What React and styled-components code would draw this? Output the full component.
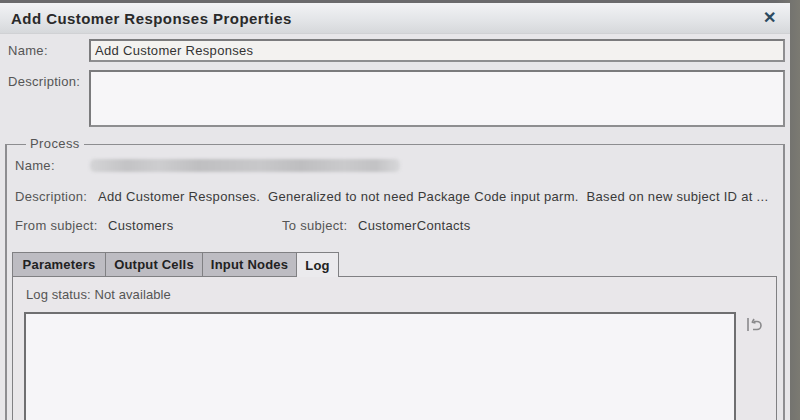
import React from "react";
import styled, { createGlobalStyle } from "styled-components";

const GlobalStyle = createGlobalStyle`
  html, body { margin: 0; padding: 0; }
  body {
    background: #6d6d6f;
    font-family: "Liberation Sans", Arial, sans-serif;
    color: #333;
  }
`;

const Screen = styled.div`
  width: 800px;
  height: 420px;
  overflow: hidden;
  display: flex;
  padding: 3px 10px 0 0;
  box-sizing: border-box;
  background: linear-gradient(90deg, #6a6a6c 0%, #6a6a6c 97%, #7b7a72 100%);
`;

const Dialog = styled.div`
  flex: 1;
  display: flex;
  flex-direction: column;
  background: #e7e6e9;
  min-height: 0;
`;

const TitleBar = styled.div`
  height: 30px;
  flex: none;
  display: flex;
  align-items: center;
  justify-content: space-between;
  padding: 0 14px 0 11px;
  background: linear-gradient(#f2f3f5, #e2e4e7 60%, #d6d8db);
  border-bottom: 1px solid #d0d1d4;
`;

const Title = styled.h1`
  margin: 0;
  font-size: 15px;
  font-weight: bold;
  color: #2a2a2a;
  letter-spacing: 0.45px;
`;

const Close = styled.span`
  font-size: 16px;
  font-weight: bold;
  color: #2d4a5f;
  line-height: 1;
`;

const Body = styled.div`
  display: flex;
  flex-direction: column;
  gap: 8px;
  padding: 5px 5px 0 8px;
  flex: 1;
  min-height: 0;
`;

const FieldRow = styled.div`
  display: grid;
  grid-template-columns: 81px 1fr;
  align-items: ${(p) => (p.$top ? "start" : "center")};
`;

const Label = styled.span`
  font-size: 13px;
  color: #555;
  letter-spacing: 0.3px;
  padding-top: ${(p) => (p.$top ? "4px" : "0")};
`;

const TextBox = styled.div`
  height: ${(p) => p.$h}px;
  box-sizing: border-box;
  border: 2px solid #7b7b7d;
  border-right-color: #8e8e90;
  border-bottom-color: #8e8e90;
  background: ${(p) => p.$bg};
  font-size: 13px;
  color: #333;
  padding: 2px 4px;
  letter-spacing: 0.3px;
`;

const Group = styled.fieldset`
  margin: 2px 0 0 -3px;
  padding: 0 6px 0 5px;
  border: 1px solid #8d8d90;
  border-left-width: 2px;
  border-right-width: 2px;
  border-bottom: none;
  flex: 1;
  min-height: 0;
  display: flex;
  flex-direction: column;
`;

const Legend = styled.legend`
  margin-left: 14px;
  padding: 0 4px;
  font-size: 13px;
  color: #555;
  letter-spacing: 0.4px;
  line-height: 14px;
`;

const InfoRow = styled.div`
  display: flex;
  align-items: center;
  height: ${(p) => p.$h}px;
  flex: none;
  padding-left: 3px;
  font-size: 13px;
  color: #555;
  white-space: nowrap;
  letter-spacing: 0.3px;
`;

const InfoLabel = styled.span`
  width: ${(p) => p.$w}px;
  flex: none;
`;

const InfoValue = styled.span`
  color: #3a3a3a;
  width: ${(p) => (p.$w ? `${p.$w}px` : "auto")};
  flex: none;
`;

/* blurred-out process name */
const Redacted = styled.div`
  width: 310px;
  height: 13px;
  border-radius: 5px;
  background: linear-gradient(
    90deg,
    #d4d4d6 0%,
    #c3c3c5 12%,
    #cdcdcf 22%,
    #bfbfc1 35%,
    #c8c8ca 55%,
    #bebec0 68%,
    #cacacc 82%,
    #c2c2c4 92%,
    #d8d8da 100%
  );
  filter: blur(1.8px);
`;

const Tabs = styled.div`
  display: flex;
  align-items: flex-end;
  margin-top: 15px;
  height: 25px;
  flex: none;
`;

const Tab = styled.div`
  width: ${(p) => p.$w}px;
  height: ${(p) => (p.$active ? 26 : 25)}px;
  box-sizing: border-box;
  display: flex;
  align-items: center;
  justify-content: center;
  font-size: 13px;
  font-weight: bold;
  letter-spacing: 0.2px;
  color: #222;
  background: ${(p) => (p.$active ? "#ebeaed" : "#bdbcc2")};
  border: 1px solid #808083;
  border-left-width: ${(p) => (p.$first ? 1 : 0)}px;
  border-bottom: ${(p) => (p.$active ? "none" : "1px solid #808083")};
  margin-bottom: ${(p) => (p.$active ? "-1px" : "0")};
  flex: none;
`;

const TabFill = styled.div`
  flex: 1;
  height: 0;
  border-bottom: 1px solid #808083;
`;

const Panel = styled.div`
  flex: 1;
  min-height: 0;
  border: 1px solid #808083;
  border-top: none;
  border-bottom: none;
  background: #e9e7ea;
  display: flex;
  flex-direction: column;
  padding: 10px 0 0 11px;
`;

const Status = styled.div`
  font-size: 13px;
  color: #555;
  letter-spacing: 0.1px;
  padding-left: 2px;
  height: 16px;
  line-height: 16px;
`;

const LogRow = styled.div`
  flex: 1;
  min-height: 0;
  display: flex;
  margin-top: 9px;
  gap: 10px;
`;

const LogArea = styled.div`
  flex: 1;
  border: 2px solid #6f6f71;
  border-bottom: none;
  background: #f6f5f8;
`;

const Side = styled.div`
  width: 30px;
  flex: none;
  padding-top: 4px;
`;

const UndoIcon = () => (
  <svg width="18" height="17" viewBox="0 0 18 17" fill="none" stroke="#8a8a8c" strokeWidth="1.6">
    <line x1="2" y1="2" x2="2" y2="15" />
    <path d="M8 5.5 H11 A4 4 0 0 1 11 13.5 H7" />
    <path d="M8 3 L6.3 6.2 L9.5 7" strokeLinejoin="round" />
  </svg>
);

export default function App() {
  return (
    <>
      <GlobalStyle />
      <Screen>
        <Dialog>
          <TitleBar>
            <Title>Add Customer Responses Properties</Title>
            <Close>✕</Close>
          </TitleBar>
          <Body>
            <FieldRow>
              <Label>Name:</Label>
              <TextBox $h={23} $bg="#f3f2f0">Add Customer Responses</TextBox>
            </FieldRow>
            <FieldRow $top>
              <Label $top>Description:</Label>
              <TextBox $h={57} $bg="#f7f6f8" />
            </FieldRow>
            <Group>
              <Legend>Process</Legend>
              <InfoRow $h={28}>
                <InfoLabel $w={75}>Name:</InfoLabel>
                <Redacted />
              </InfoRow>
              <InfoRow $h={34}>
                <InfoLabel $w={83}>Description:</InfoLabel>
                <InfoValue>
                  Add Customer Responses.&nbsp; Generalized to not need Package Code input parm.&nbsp; Based on new subject ID at ...
                </InfoValue>
              </InfoRow>
              <InfoRow $h={24}>
                <InfoLabel $w={93}>From subject:</InfoLabel>
                <InfoValue $w={174}>Customers</InfoValue>
                <InfoLabel $w={76}>To subject:</InfoLabel>
                <InfoValue>CustomerContacts</InfoValue>
              </InfoRow>
              <Tabs>
                <Tab $first $w={94}>Parameters</Tab>
                <Tab $w={97}>Output Cells</Tab>
                <Tab $w={94}>Input Nodes</Tab>
                <Tab $active $w={42}>Log</Tab>
                <TabFill />
              </Tabs>
              <Panel>
                <Status>Log status: Not available</Status>
                <LogRow>
                  <LogArea />
                  <Side>
                    <UndoIcon />
                  </Side>
                </LogRow>
              </Panel>
            </Group>
          </Body>
        </Dialog>
      </Screen>
    </>
  );
}
